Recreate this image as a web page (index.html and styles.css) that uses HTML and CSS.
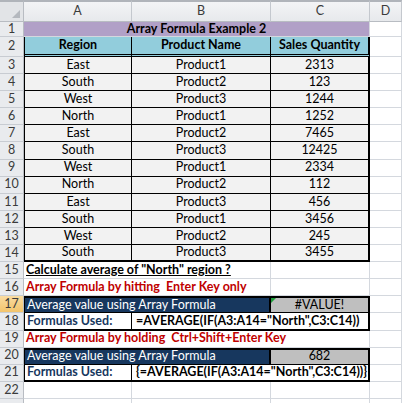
FILE: index.html
```html
<!DOCTYPE html>
<html>
<head>
<meta charset="utf-8">
<link rel="stylesheet" href="styles.css">
</head>
<body>
<div class="sheet">
  <div class="corner"><span class="tri"></span></div>
  <div class="ch">A</div><div class="ch">B</div><div class="ch">C</div><div class="ch">D</div>

  <div class="rh">1</div><div class="title span3">Array Formula Example 2</div><div class="c"></div>

  <div class="rh">2</div><div class="hd hl">Region</div><div class="hd">Product Name</div><div class="hd hr">Sales Quantity</div><div class="c"></div>

  <div class="rh">3</div><div class="t tl">East</div><div class="t">Product1</div><div class="t tr">2313</div><div class="c"></div>
  <div class="rh">4</div><div class="t tl">South</div><div class="t">Product2</div><div class="t tr">123</div><div class="c"></div>
  <div class="rh">5</div><div class="t tl">West</div><div class="t">Product3</div><div class="t tr">1244</div><div class="c"></div>
  <div class="rh">6</div><div class="t tl">North</div><div class="t">Product1</div><div class="t tr">1252</div><div class="c"></div>
  <div class="rh">7</div><div class="t tl">East</div><div class="t">Product2</div><div class="t tr">7465</div><div class="c"></div>
  <div class="rh">8</div><div class="t tl">South</div><div class="t">Product3</div><div class="t tr">12425</div><div class="c"></div>
  <div class="rh">9</div><div class="t tl">West</div><div class="t">Product1</div><div class="t tr">2334</div><div class="c"></div>
  <div class="rh">10</div><div class="t tl">North</div><div class="t">Product2</div><div class="t tr">112</div><div class="c"></div>
  <div class="rh">11</div><div class="t tl">East</div><div class="t">Product3</div><div class="t tr">456</div><div class="c"></div>
  <div class="rh">12</div><div class="t tl">South</div><div class="t">Product1</div><div class="t tr">3456</div><div class="c"></div>
  <div class="rh">13</div><div class="t tl">West</div><div class="t">Product2</div><div class="t tr">245</div><div class="c"></div>
  <div class="rh">14</div><div class="t tl tb">South</div><div class="t tb">Product3</div><div class="t tr tb">3455</div><div class="c"></div>

  <div class="rh">15</div><div class="c span2 q">Calculate average of "North" region ?</div><div class="c"></div><div class="c"></div>
  <div class="rh">16</div><div class="c span2 red">Array Formula by hitting&nbsp; Enter Key only</div><div class="c"></div><div class="c"></div>

  <div class="rh sel">17</div><div class="navy span2">Average value using Array Formula</div><div class="gray"><span class="err"></span>#VALUE!</div><div class="c"></div>
  <div class="rh">18</div><div class="fu">Formulas Used:</div><div class="fx span2">=AVERAGE(IF(A3:A14="North",C3:C14))</div><div class="c"></div>

  <div class="rh">19</div><div class="c span3 red">Array Formula by holding&nbsp; Ctrl+Shift+Enter Key</div><div class="c"></div>

  <div class="rh">20</div><div class="navy span2">Average value using Array Formula</div><div class="gray">682</div><div class="c"></div>
  <div class="rh">21</div><div class="fu">Formulas Used:</div><div class="fx span2">{=AVERAGE(IF(A3:A14="North",C3:C14))}</div><div class="c"></div>

  <div class="rh">22</div><div class="c"></div><div class="c"></div><div class="c"></div><div class="c"></div>
  <div class="rh"></div><div class="c"></div><div class="c"></div><div class="c"></div><div class="c"></div>
</div>
</body>
</html>
```

FILE: styles.css
```css
* { box-sizing: border-box; }
html, body { margin: 0; padding: 0; background: #fff; }
body { width: 402px; height: 403px; overflow: hidden; }

.sheet {
  display: grid;
  grid-template-columns: 24px 108px 139px 99px 1fr;
  grid-template-rows: 22px 15px 20px repeat(21, 17.1px);
  font-family: Lato, "Liberation Sans", sans-serif;
  font-size: 12.5px;
  color: #000;
  width: 402px;
}

.sheet > div {
  display: flex;
  align-items: center;
  white-space: nowrap;
  overflow: hidden;
  border-right: 1px solid #d4d8de;
  border-bottom: 1px solid #d4d8de;
  padding: 0 2px;
  line-height: 1;
}

.span2 { grid-column: span 2; }
.span3 { grid-column: span 3; }

.corner {
  background: #e2e4e7;
  border-right: 1px solid #b8bcc2 !important;
  border-bottom: 1px solid #b8bcc2 !important;
  border-top: 2px solid #b0b4ba;
  position: relative;
}
.tri {
  position: absolute;
  right: 3px;
  bottom: 3px;
  width: 0; height: 0;
  border-left: 8px solid transparent;
  border-bottom: 8px solid #b4b8be;
}

.ch {
  justify-content: center;
  background: linear-gradient(#f3f4f6, #e7e9ec);
  color: #3b3b3b;
  border-top: 2px solid #b0b4ba;
  border-right: 1px solid #c4c8ce !important;
  border-bottom: 1px solid #b8bcc2 !important;
  font-size: 12.5px;
}

.rh {
  justify-content: center;
  background: #e9ebee;
  color: #3b3b3b;
  border-right: 1px solid #b8bcc2 !important;
  border-bottom: 1px solid #c8ccd2 !important;
  font-size: 12.5px;
}
.rh.sel { background: linear-gradient(#f9dba0, #f3c46c); }

.title {
  justify-content: center;
  background: #b1a0c7;
  font-weight: bold;
}

.hd {
  justify-content: center;
  background: #92cddc;
  font-weight: bold;
  border-right: 1px solid #000 !important;
  border-bottom: 3px double #000 !important;
}
.hl { border-left: 1px solid #000; }
.hr { border-right: 2px solid #000 !important; }

.t {
  justify-content: center;
  background: #f2f2f2;
  border-right: 1px solid #000 !important;
  border-bottom: 1px solid #000 !important;
}
.tl { border-left: 1px solid #000; }
.tr { border-right: 2px solid #000 !important; }
.tb { border-bottom: 2px solid #000 !important; }

.q { font-weight: bold; text-decoration: underline; }
.red { color: #c00000; font-weight: bold; }

.navy {
  background: #17375e;
  color: #fff;
  border-top: 2px solid #000;
  border-left: 1px solid #000;
  border-bottom: 1px solid #000 !important;
  border-right: 2px solid #000 !important;
}
.gray {
  justify-content: center;
  background: #bfbfbf;
  border-top: 2px solid #000;
  border-bottom: 1px solid #000 !important;
  border-right: 2px solid #000 !important;
  position: relative;
}
.err {
  position: absolute;
  left: 0; top: 0;
  width: 0; height: 0;
  border-top: 5px solid #1e9e3a;
  border-right: 5px solid transparent;
}
.fu {
  color: #17375e;
  font-weight: bold;
  border-left: 1px solid #000;
  border-right: 1px solid #000 !important;
  border-bottom: 2px solid #000 !important;
}
.fx {
  font-weight: bold;
  padding-left: 4px !important;
  border-right: 2px solid #000 !important;
  border-bottom: 2px solid #000 !important;
}
```
